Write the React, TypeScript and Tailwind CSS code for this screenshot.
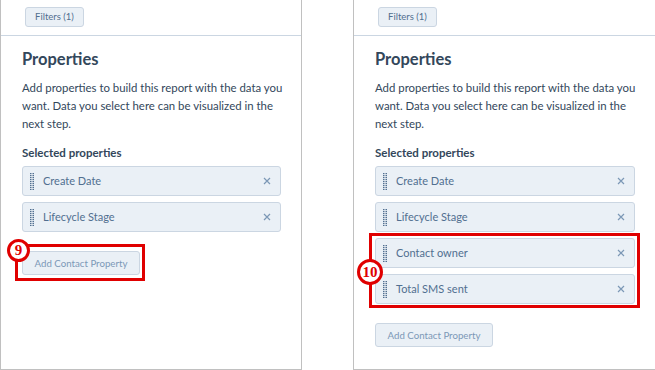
import React from "react";

const font = { fontFamily: 'Lato, "Noto Sans", sans-serif' };

function Grip() {
  return (
    <svg width="4" height="17" viewBox="0 0 4 17" className="shrink-0">
      {Array.from({ length: 9 }).map((_, i) => (
        <g key={i}>
          <rect x="0" y={i * 2} width="1.5" height="1.2" fill="#516f90" />
          <rect x="2.5" y={i * 2} width="1.5" height="1.2" fill="#516f90" />
        </g>
      ))}
    </svg>
  );
}

function XIcon() {
  return (
    <svg width="8" height="8" viewBox="0 0 8 8" className="shrink-0">
      <path d="M1 1 L7 7 M7 1 L1 7" stroke="#7c98b6" strokeWidth="1.2" />
    </svg>
  );
}

function Item({ label }: { label: string }) {
  return (
    <div className="h-[30px] shrink-0 flex items-center bg-[#eaf0f6] border border-[#cbd6e2] rounded-[3px] pl-[7px] pr-[9px]">
      <Grip />
      <span className="ml-[9px] text-[11px] text-[#516f90] flex-1">{label}</span>
      <XIcon />
    </div>
  );
}

function Badge({ n, size }: { n: string; size: number }) {
  return (
    <div
      className="absolute rounded-full bg-white border-[3px] border-[#e00000] flex items-center justify-center text-[#e00000] font-bold"
      style={{ width: size, height: size, fontFamily: '"Liberation Serif", serif', fontSize: 15 }}
    >
      {n}
    </div>
  );
}

function AddButton() {
  return (
    <div className="w-[118px] h-[24px] flex items-center justify-center bg-[#eaf0f6] border border-[#cbd6e2] rounded-[3px] text-[9.7px] text-[#7c98b6] whitespace-nowrap">
      Add Contact Property
    </div>
  );
}

function Panel({ right }: { right?: boolean }) {
  return (
    <div
      className={
        right
          ? "w-[302px] h-[370px] shrink-0 border-l border-b border-[#c0c0c0] flex flex-col"
          : "w-[302px] h-[370px] shrink-0 border-x border-b border-[#c0c0c0] flex flex-col"
      }
    >
      <div className="h-[36px] shrink-0 border-b border-[#cbd6e2] pt-[7px] pl-[24px]">
        <div className="w-[59px] h-[20px] flex items-center justify-center bg-[#eaf0f6] border border-[#cbd6e2] rounded-[3px] text-[9.5px] text-[#516f90] whitespace-nowrap">
          Filters (1)
        </div>
      </div>
      <div className="pl-[21px] pr-[20px] pt-[11px]">
        <div className="text-[16.5px] leading-[24px] font-bold text-[#33475b]">Properties</div>
        <p className="mt-[8px] text-[11.4px] leading-[18px] text-[#33475b] whitespace-nowrap">
          Add properties to build this report with the data you
          <br />
          want. Data you select here can be visualized in the
          <br />
          next step.
        </p>
        <div className="mt-[12px] text-[11.5px] leading-[16px] font-bold text-[#33475b]">Selected properties</div>
        <div className="mt-[5px] flex flex-col gap-[6px]">
          <Item label="Create Date" />
          <Item label="Lifecycle Stage" />
          {right && (
            <div className="relative flex flex-col gap-[6px]">
              <div className="absolute left-[-6px] right-[-5px] top-[-5px] bottom-[-4px] border-[3px] border-[#e00000]" />
              <div className="absolute left-[-18px] top-[21px]">
                <Badge n="10" size={26} />
              </div>
              <Item label="Contact owner" />
              <Item label="Total SMS sent" />
            </div>
          )}
        </div>
        <div className="mt-[19px] relative w-[118px]">
          {!right && (
            <>
              <div className="absolute left-[-7px] right-[-5px] top-[-7px] bottom-[-6px] border-[3px] border-[#e00000]" />
              <div className="absolute left-[-15px] top-[-12px]">
                <Badge n="9" size={23} />
              </div>
            </>
          )}
          <AddButton />
        </div>
      </div>
    </div>
  );
}

export default function App() {
  return (
    <div className="w-[655px] h-[370px] bg-white flex gap-[51px] overflow-hidden" style={font}>
      <Panel />
      <Panel right />
    </div>
  );
}
